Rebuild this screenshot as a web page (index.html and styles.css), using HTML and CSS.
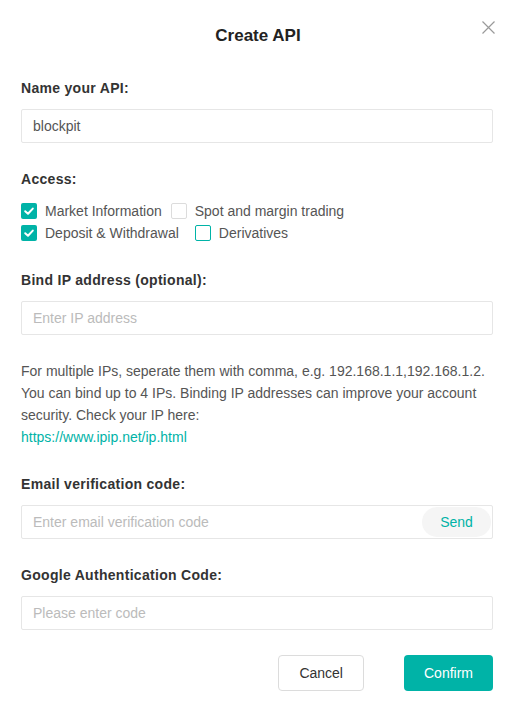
FILE: index.html
```html
<!DOCTYPE html>
<html lang="en">
<head>
<meta charset="utf-8">
<title>Create API</title>
<link rel="stylesheet" href="styles.css">
</head>
<body>
<div class="dialog">
  <header class="dialog-header">
    <h1 class="dialog-title">Create API</h1>
    <button class="close-btn" aria-label="Close">
      <svg width="13" height="13" viewBox="0 0 13 13"><path d="M0.5 0.5 L12.5 12.5 M12.5 0.5 L0.5 12.5" stroke="#9a9a9a" stroke-width="1.2" fill="none"/></svg>
    </button>
  </header>

  <section class="field">
    <label class="field-label">Name your API:</label>
    <div class="input-box"><span class="input-value">blockpit</span></div>
  </section>

  <section class="field">
    <label class="field-label">Access:</label>
    <div class="checks">
      <div class="check-row">
        <span class="check-item gap-sm"><span class="cb cb-on"><svg width="16" height="16" viewBox="0 0 16 16"><path d="M4.2 8.2 L7 10.8 L11.8 5.6" stroke="#fff" stroke-width="2" fill="none" stroke-linecap="round" stroke-linejoin="round"/></svg></span>Market Information</span>
        <span class="check-item"><span class="cb cb-off"></span>Spot and margin trading</span>
      </div>
      <div class="check-row">
        <span class="check-item gap-lg"><span class="cb cb-on"><svg width="16" height="16" viewBox="0 0 16 16"><path d="M4.2 8.2 L7 10.8 L11.8 5.6" stroke="#fff" stroke-width="2" fill="none" stroke-linecap="round" stroke-linejoin="round"/></svg></span>Deposit &amp; Withdrawal</span>
        <span class="check-item"><span class="cb cb-focus"></span>Derivatives</span>
      </div>
    </div>
  </section>

  <section class="field">
    <label class="field-label">Bind IP address (optional):</label>
    <div class="input-box"><span class="placeholder">Enter IP address</span></div>
  </section>

  <p class="hint">For multiple IPs, seperate them with comma, e.g. 192.168.1.1,192.168.1.2. You can bind up to 4 IPs. Binding IP addresses can improve your account security. Check your IP here:<br><a class="link" href="#">https://www.ipip.net/ip.html</a></p>

  <section class="field">
    <label class="field-label">Email verification code:</label>
    <div class="input-box with-btn"><span class="placeholder">Enter email verification code</span><span class="send-btn">Send</span></div>
  </section>

  <section class="field">
    <label class="field-label">Google Authentication Code:</label>
    <div class="input-box"><span class="placeholder">Please enter code</span></div>
  </section>

  <footer class="actions">
    <button class="btn btn-cancel">Cancel</button>
    <button class="btn btn-confirm">Confirm</button>
  </footer>
</div>
</body>
</html>
```

FILE: styles.css
```css
* { box-sizing: border-box; }
html, body {
  margin: 0;
  padding: 0;
  background: #fff;
  font-family: "Liberation Sans", Arial, sans-serif;
  font-size: 14px;
  color: #555;
}
.dialog {
  width: 516px;
  padding: 0 23px 0 21px;
}
.dialog-header {
  position: relative;
  height: 70px;
  display: flex;
  align-items: center;
  justify-content: center;
  padding-top: 2px;
}
.dialog-title {
  margin: 0;
  font-size: 17px;
  font-weight: bold;
  color: #222;
  line-height: 20px;
  padding-left: 2px;
}
.close-btn {
  position: absolute;
  right: -2px;
  top: 21px;
  width: 13px;
  height: 13px;
  padding: 0;
  border: 0;
  background: none;
  display: block;
}
.close-btn svg { display: block; }
.field {
  display: flex;
  flex-direction: column;
  margin-top: 8px;
}
.field + .field, .hint + .field { margin-top: 26px; }
.field-label {
  display: block;
  font-weight: bold;
  color: #333;
  line-height: 20px;
  letter-spacing: 0.3px;
  margin-bottom: 11px;
}
.input-box {
  height: 34px;
  border: 1px solid #e6e6e6;
  border-radius: 2px;
  display: flex;
  align-items: center;
  padding: 0 1px 0 11px;
}
.input-value { color: #555; }
.placeholder { color: #bbb; flex: 1; }
.send-btn {
  height: 30px;
  width: 69px;
  border-radius: 15px;
  background: #f5f5f5;
  color: #00b3a7;
  display: flex;
  align-items: center;
  justify-content: center;
}
.checks { display: flex; flex-direction: column; }
.check-row {
  display: flex;
  align-items: center;
  height: 22px;
}
.check-item {
  display: inline-flex;
  align-items: center;
  color: #555;
}
.gap-sm { margin-right: 9px; }
.gap-lg { margin-right: 16px; }
.cb {
  width: 16px;
  height: 16px;
  border-radius: 2px;
  margin-right: 8px;
  display: inline-block;
}
.cb svg { display: block; }
.cb-on { background: #00b3a7; }
.cb-off { border: 1px solid #dcdcdc; }
.cb-focus { border: 1px solid #00b3a7; }
.hint {
  margin: 25px 0 0;
  line-height: 22px;
  color: #555;
}
.link { color: #00b3a7; text-decoration: none; }
.actions {
  display: flex;
  justify-content: flex-end;
  gap: 40px;
  margin-top: 25px;
}
.btn {
  height: 36px;
  padding: 0 20px;
  border-radius: 4px;
  font-family: "Liberation Sans", Arial, sans-serif;
  font-size: 14px;
}
.btn-cancel {
  background: #fff;
  border: 1px solid #dcdcdc;
  color: #333;
}
.btn-confirm {
  background: #00b3a7;
  border: 0;
  color: #fff;
}
```
